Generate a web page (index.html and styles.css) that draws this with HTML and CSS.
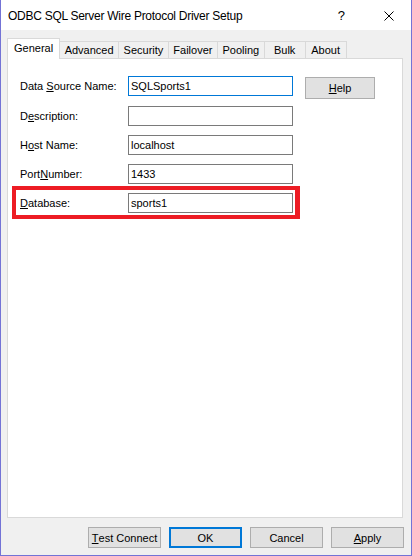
FILE: index.html
```html
<!DOCTYPE html>
<html>
<head>
<meta charset="utf-8">
<link rel="stylesheet" href="styles.css">
</head>
<body>
<div class="window">
  <div class="titlebar">
    <span class="title">ODBC SQL Server Wire Protocol Driver Setup</span>
    <span class="qmark">?</span>
    <svg class="close" width="10" height="10" viewBox="0 0 10 10"><path d="M0.5 0.5 L9.5 9.5 M9.5 0.5 L0.5 9.5" stroke="#000" stroke-width="1" fill="none"/></svg>
  </div>
  <div class="client">
    <div class="tabs">
      <div class="tab active">General</div>
      <div class="tab">Advanced</div>
      <div class="tab">Security</div>
      <div class="tab">Failover</div>
      <div class="tab">Pooling</div>
      <div class="tab">Bulk</div>
      <div class="tab">About</div>
    </div>
    <div class="panel">
      <div class="form">
        <div class="row">
          <span class="lbl">Data <u>S</u>ource Name:</span>
          <div class="input focus">SQLSports1</div>
        </div>
        <div class="row gap10">
          <span class="lbl">D<u>e</u>scription:</span>
          <div class="input"></div>
        </div>
        <div class="row gap9">
          <span class="lbl">H<u>o</u>st Name:</span>
          <div class="input">localhost</div>
        </div>
        <div class="row gap9">
          <span class="lbl">Port<u>N</u>umber:</span>
          <div class="input">1433</div>
        </div>
        <div class="row highlight">
          <span class="lbl"><u>D</u>atabase:</span>
          <div class="input">sports1</div>
        </div>
      </div>
      <div class="btn help"><u>H</u>elp</div>
    </div>
    <div class="footer">
      <div class="btn"><u>T</u>est Connect</div>
      <div class="btn default">OK</div>
      <div class="btn">Cancel</div>
      <div class="btn"><u>A</u>pply</div>
    </div>
  </div>
</div>
</body>
</html>
```
FILE: styles.css
```css
* { box-sizing: border-box; }
body {
  margin: 0;
  font-family: "Liberation Sans", Arial, sans-serif;
  font-size: 11px;
  color: #000;
}
.window {
  width: 412px;
  height: 556px;
  border: 1px solid #7373d6;
  border-top: none;
  background: #f0f0f0;
  display: flex;
  flex-direction: column;
}
.titlebar {
  height: 30px;
  background: #fff;
  display: flex;
  align-items: center;
  padding-left: 7px;
}
.title {
  font-size: 12px;
  letter-spacing: -0.27px;
  flex: 1;
  padding-top: 1px;
}
.qmark {
  font-size: 13px;
  margin-right: 39px;
  padding-top: 1px;
}
.close {
  margin-right: 17px;
  margin-top: 1px;
}
.client {
  flex: 1;
  padding: 8px 8px 0 6px;
  display: flex;
  flex-direction: column;
}
.tabs {
  display: flex;
  align-items: flex-end;
  height: 20px;
}
.tab {
  height: 17px;
  border: 1px solid #d9d9d9;
  border-bottom: none;
  margin-left: -1px;
  padding: 0 4.5px;
  min-width: 42px;
  display: flex;
  align-items: center;
  justify-content: center;
  line-height: 13px;
  background: #f0f0f0;
}
.tab.active {
  margin-left: 0;
  height: 21px;
  margin-bottom: -1px;
  padding: 3px 6px 0;
  align-items: flex-start;
  background: #fff;
  position: relative;
  z-index: 1;
}
.panel {
  height: 460px;
  background: #fff;
  border: 1px solid #d9d9d9;
  padding: 17px 0 0 12px;
  display: flex;
  align-items: flex-start;
  gap: 12px;
}
.form {
  width: 273px;
  display: flex;
  flex-direction: column;
}
.row {
  display: flex;
  align-items: center;
}
.gap10 { margin-top: 10px; }
.gap9 { margin-top: 9px; }
.lbl {
  width: 108px;
  flex: none;
}
.lbl u, .btn u { text-decoration: underline; text-underline-offset: 1px; }
.input {
  width: 165px;
  flex: none;
  height: 20px;
  border: 1px solid #7a7a7a;
  padding-left: 2px;
  line-height: 18px;
  background: #fff;
}
.input.focus {
  border-color: #0078d7;
}
.row.highlight {
  width: 288px;
  margin-top: 2px;
  margin-left: -8px;
  border: 4px solid #ed1c24;
  border-right-width: 5px;
  padding: 3px 2px 2px 4px;
}
.btn {
  width: 73px;
  height: 21px;
  border: 1px solid #adadad;
  background: #e1e1e1;
  display: flex;
  align-items: center;
  justify-content: center;
}
.btn.help {
  width: 70px;
  height: 22px;
  margin-top: 1px;
}
.btn.default {
  border: 2px solid #0078d7;
}
.footer {
  display: flex;
  justify-content: flex-end;
  gap: 8px;
  padding-top: 9px;
  margin-right: -1px;
}
```
